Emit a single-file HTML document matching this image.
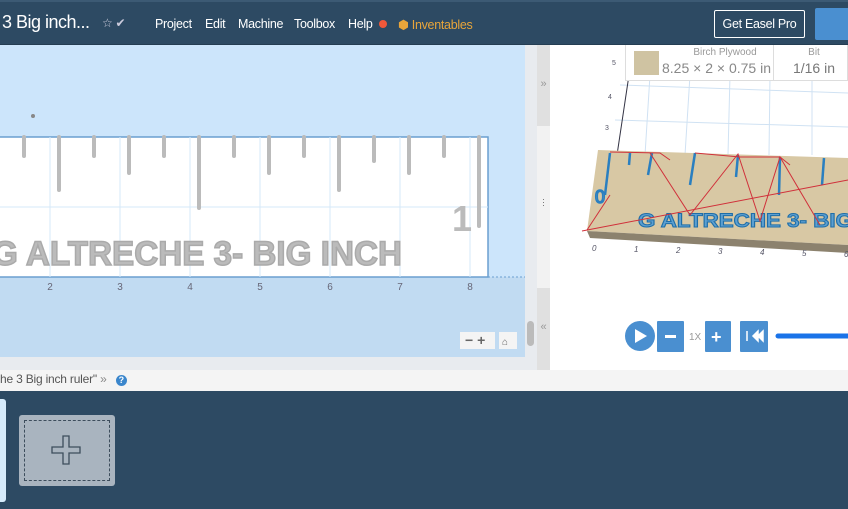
<!DOCTYPE html><html><head><style>
*{margin:0;padding:0;box-sizing:border-box}
body{width:848px;height:509px;overflow:hidden;position:relative;font-family:"Liberation Sans",sans-serif;background:#2d4a63}
.a{position:absolute}
.nav span{position:absolute;top:15px;color:#fff;font-size:12.5px;letter-spacing:-0.3px}
</style></head><body>
<div class="a nav" style="left:0;top:0;width:848px;height:45px;background:#2d4a63;border-top:2px solid #3c5a74;border-bottom:1px solid #243d52">
<span style="left:2px;top:10px;font-size:18px;letter-spacing:-0.5px">3 Big inch...</span>
<span style="left:102px;top:14px;font-size:12px;color:#ccd">☆ ✔</span>
<span style="left:155px">Project</span><span style="left:205px">Edit</span><span style="left:238px">Machine</span><span style="left:294px">Toolbox</span><span style="left:348px">Help</span>
<span style="left:379px;top:18px;width:8px;height:8px;border-radius:4px;background:#f0583a"></span>
<span style="left:398px;color:#e8a53a">⬢ Inventables</span>
<div class="a" style="left:714px;top:8px;width:91px;height:28px;border:1px solid #fff;border-radius:2px;color:#fff;font-size:12.5px;letter-spacing:-0.3px;text-align:center;line-height:26px">Get Easel Pro</div>
<div class="a" style="left:815px;top:6px;width:40px;height:32px;background:#4a8fd0;border-radius:2px"></div>
</div>
<div class="a" style="left:0;top:45px;width:525px;height:312px;background:#cce5fb"></div>
<div class="a" style="left:0;top:277px;width:525px;height:80px;background:#c1dbf2"></div>
<div class="a" style="left:0;top:357px;width:537px;height:13px;background:#e8ebef"></div>
<div class="a" style="left:525px;top:45px;width:12px;height:312px;background:#e8ebef"></div>
<div class="a" style="left:527px;top:321px;width:7px;height:25px;border-radius:4px;background:#bbb"></div>
<div class="a" style="left:537px;top:45px;width:13px;height:81px;background:#e0e0e0;color:#999;font-size:11px;text-align:center;padding-top:33px">»</div>
<div class="a" style="left:537px;top:126px;width:13px;height:162px;background:#f2f2f2;color:#666;font-size:9px;text-align:center;padding-top:72px;line-height:3px">·<br>·<br>·</div>
<div class="a" style="left:537px;top:288px;width:13px;height:82px;background:#e0e0e0;color:#999;font-size:11px;text-align:center;padding-top:33px">«</div>
<svg class="a" style="left:0;top:45px" width="525" height="312">
<line x1="488" y1="232" x2="525" y2="232" stroke="#6a9fd0" stroke-dasharray="2,2"/>
<rect x="-2" y="92" width="490" height="140" fill="#fff" stroke="#6a9fd0" stroke-width="1.5"/>
<g stroke="#d6e8f8"><line x1="50" y1="92" x2="50" y2="232"/><line x1="120" y1="92" x2="120" y2="232"/><line x1="190" y1="92" x2="190" y2="232"/><line x1="260" y1="92" x2="260" y2="232"/><line x1="330" y1="92" x2="330" y2="232"/><line x1="400" y1="92" x2="400" y2="232"/><line x1="470" y1="92" x2="470" y2="232"/><line x1="0" y1="162" x2="488" y2="162"/></g>
<circle cx="33" cy="71" r="2" fill="#888"/>
<g stroke="#bbb" stroke-width="4" stroke-linecap="round">
<line x1="24" y1="92" x2="24" y2="111"/><line x1="59" y1="92" x2="59" y2="145"/><line x1="94" y1="92" x2="94" y2="111"/><line x1="129" y1="92" x2="129" y2="128"/><line x1="164" y1="92" x2="164" y2="111"/><line x1="199" y1="92" x2="199" y2="163"/><line x1="234" y1="92" x2="234" y2="111"/><line x1="269" y1="92" x2="269" y2="128"/><line x1="304" y1="92" x2="304" y2="111"/><line x1="339" y1="92" x2="339" y2="145"/><line x1="374" y1="92" x2="374" y2="116"/><line x1="409" y1="92" x2="409" y2="128"/><line x1="444" y1="92" x2="444" y2="111"/><line x1="479" y1="92" x2="479" y2="181"/></g>
<text x="452" y="186" font-size="36" font-weight="bold" fill="#bbb" font-family="Liberation Sans">1</text>
<text x="-8" y="220" font-size="34" font-weight="bold" fill="#bbb" stroke="#aaa" stroke-width="1.5" font-family="Liberation Sans" textLength="410" lengthAdjust="spacingAndGlyphs">G ALTRECHE 3- BIG INCH</text>
<g font-size="10" fill="#667" text-anchor="middle"><text x="50" y="245">2</text><text x="120" y="245">3</text><text x="190" y="245">4</text><text x="260" y="245">5</text><text x="330" y="245">6</text><text x="400" y="245">7</text><text x="470" y="245">8</text></g>
<rect x="460" y="287" width="35" height="17" fill="#f4f4f4"/><text x="465" y="300" font-size="14" font-weight="bold" fill="#666">− +</text>
<rect x="499" y="287" width="18" height="17" fill="#f4f4f4"/><text x="502" y="300" font-size="10" fill="#666">⌂</text>
</svg>
<div class="a" style="left:550px;top:45px;width:298px;height:325px;background:#fff"></div>
<svg class="a" style="left:550px;top:45px" width="298" height="325">
<g stroke="#d0e2f3"><line x1="70" y1="40" x2="298" y2="48"/><line x1="65" y1="75" x2="298" y2="82"/><line x1="100" y1="30" x2="95" y2="110"/><line x1="140" y1="30" x2="135" y2="110"/><line x1="180" y1="30" x2="178" y2="110"/><line x1="220" y1="30" x2="219" y2="110"/><line x1="262" y1="30" x2="262" y2="110"/></g>
<line x1="82" y1="10" x2="67" y2="110" stroke="#334" stroke-width="1"/>
<text x="62" y="20" font-size="7" fill="#556">5</text><text x="58" y="54" font-size="7" fill="#556">4</text><text x="55" y="85" font-size="7" fill="#556">3</text>
<polygon points="48,105 298,113 298,200 37,186" fill="#d8c8a4"/>
<polygon points="37,186 298,200 298,208 40,193" fill="#8c826e"/>
<g stroke="#2a7fc0" stroke-width="2.5"><line x1="60" y1="108" x2="55" y2="150"/><line x1="80" y1="108" x2="79" y2="120"/><line x1="102" y1="108" x2="98" y2="130"/><line x1="145" y1="108" x2="140" y2="140"/><line x1="188" y1="110" x2="186" y2="132"/><line x1="230" y1="112" x2="229" y2="150"/><line x1="274" y1="113" x2="272" y2="140"/></g>
<text x="45" y="158" font-size="18" fill="none" stroke="#2a7fc0" stroke-width="1.5">0</text>
<text x="88" y="182" font-size="19" font-weight="bold" fill="#5c9fd0" stroke="#1f6ea8" stroke-width="1" textLength="215" lengthAdjust="spacingAndGlyphs">G ALTRECHE 3- BIG</text>
<g stroke="#d0303a" stroke-width="1" fill="none"><polyline points="60,107 110,108 120,115"/><polyline points="100,108 140,170 188,109 210,176 230,112 270,180"/><line x1="32" y1="186" x2="298" y2="135"/><line x1="37" y1="185" x2="60" y2="150"/><polyline points="145,108 190,112 230,112 240,120"/></g>
<g font-size="8" fill="#556" font-style="italic"><text x="42" y="206">0</text><text x="84" y="207">1</text><text x="126" y="208">2</text><text x="168" y="209">3</text><text x="210" y="210">4</text><text x="252" y="211">5</text><text x="294" y="212">6</text></g>
<circle cx="90" cy="291" r="15" fill="#4a8fd0"/><polygon points="85,284 85,298 97,291" fill="#fff"/>
<rect x="107" y="276" width="27" height="31" fill="#4a8fd0" rx="1"/><rect x="115" y="290" width="11" height="3" fill="#fff"/>
<text x="139" y="295" font-size="10" fill="#999">1X</text>
<rect x="155" y="276" width="26" height="31" fill="#4a8fd0" rx="1"/><text x="161" y="298" font-size="18" font-weight="bold" fill="#fff">+</text>
<rect x="190" y="276" width="28" height="31" fill="#4a8fd0" rx="1"/><path d="M197 286v10M208 286l-5 5 5 5zM213 286l-5 5 5 5z" fill="#fff" stroke="#fff" stroke-width="1.5"/>
<line x1="228" y1="291" x2="298" y2="291" stroke="#1a73e8" stroke-width="5" stroke-linecap="round"/>
</svg>
<div class="a" style="left:625px;top:45px;width:223px;height:36px;background:#fff;border:1px solid #ddd;border-top:none">
<div class="a" style="left:8px;top:6px;width:25px;height:24px;background:#cfc3a2"></div>
<div class="a" style="left:38px;top:2px;width:122px;text-align:center;font-size:10px;color:#999">Birch Plywood</div>
<div class="a" style="left:36px;top:15px;font-size:14px;color:#888">8.25 × 2 × 0.75 in</div>
<div class="a" style="left:147px;top:0;width:1px;height:35px;background:#ddd"></div>
<div class="a" style="left:148px;top:2px;width:80px;text-align:center;font-size:10px;color:#999">Bit</div>
<div class="a" style="left:148px;top:15px;width:80px;text-align:center;font-size:14px;color:#777">1/16 in</div>
</div>
<div class="a" style="left:0;top:370px;width:848px;height:21px;background:#f4f4f4;font-size:12px;color:#555;padding:2px 0 0 0;letter-spacing:-0.2px">he 3 Big inch ruler" <span style="color:#888">»</span> <span style="display:inline-block;width:11px;height:11px;border-radius:6px;background:#3a86cc;color:#fff;font-size:9px;text-align:center;line-height:11px;margin-left:6px;font-weight:bold">?</span></div>
<div class="a" style="left:-6px;top:399px;width:12px;height:103px;background:#d6ebfb;border-radius:3px"></div>
<div class="a" style="left:19px;top:415px;width:96px;height:71px;background:#a9b4bf;border-radius:3px">
<div class="a" style="left:5px;top:5px;width:86px;height:61px;border:1px dashed #3d4d5c"></div>
<svg class="a" style="left:32px;top:20px" width="32" height="32"><path d="M12 1h6v11h11v6H18v11h-6V18H1v-6h11z" fill="none" stroke="#3d4d5c" stroke-width="1.3"/></svg>
</div>
</body></html>
